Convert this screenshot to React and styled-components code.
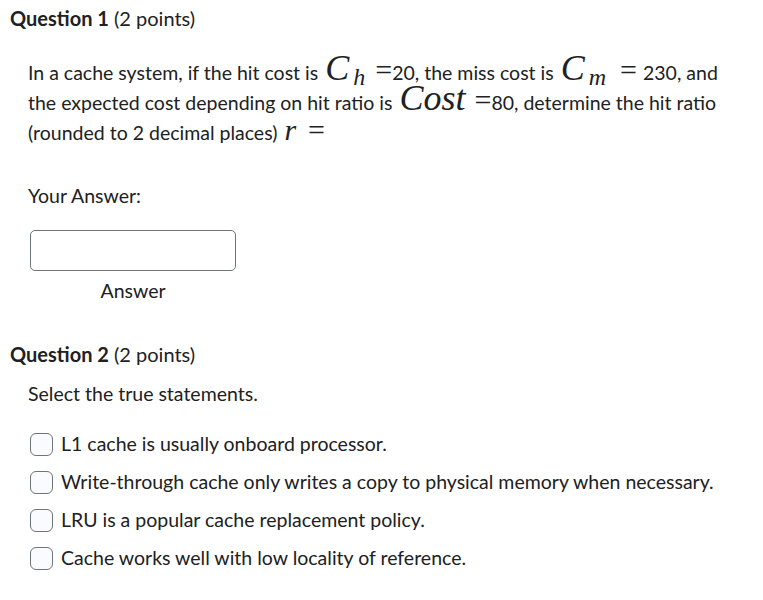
import React from "react"
import styled, { createGlobalStyle } from "styled-components"

const GlobalStyle = createGlobalStyle`
body {
  margin: 0;
  background: #fff;
  color: #202122;
  font-family: Lato, "Noto Sans", sans-serif;
}
`

const Page = styled.div`
padding: 6px 10px 0 10px;
`
const Question = styled.section`
display: flex;
flex-direction: column;
margin-top: ${p => p.gap || 0}px;
`
const Heading = styled.h2`
margin: 0;
font-size: 20px;
font-weight: 400;
line-height: 24px;
b {
  font-weight: 700;
}
`
const Body = styled.div`
padding-left: 18px;
font-size: 19.5px;
`
const Prompt = styled.p`
margin: 28px 0 0 0;
line-height: 30px;
`
const MathVar = styled.span`
font-family: "Liberation Serif", "DejaVu Serif", serif;
font-style: italic;
font-size: ${p => p.size || 36}px;
line-height: 0;
margin-left: 2px;
sub {
  font-size: 24px;
  vertical-align: -5px;
  line-height: 0;
  margin-left: 4px;
}
`
const Eq = styled.span`
font-family: "Liberation Serif", "DejaVu Serif", serif;
font-size: 30px;
line-height: 0;
margin: 0 ${p => p.right || 0}px 0 ${p => p.left || 8}px;
`
const Label = styled.p`
margin: ${p => p.top || 36}px 0 0 0;
line-height: 24px;
`
const AnswerBox = styled.div`
display: flex;
flex-direction: column;
align-items: center;
width: 206px;
margin: 22px 0 0 2px;
`
const TextInput = styled.input`
box-sizing: border-box;
width: 206px;
height: 41px;
border: 1px solid #6e7477;
border-radius: 5px;
outline: none;
`
const AnswerCaption = styled.span`
margin-top: 8px;
line-height: 24px;
`
const Options = styled.div`
display: flex;
flex-direction: column;
gap: 14px;
margin-top: 26px;
`
const Option = styled.label`
display: flex;
align-items: center;
gap: 8px;
line-height: 24px;
`
const Box = styled.span`
box-sizing: border-box;
width: 23px;
height: 23px;
margin-left: 2px;
border: 1.5px solid #6e7477;
border-radius: 6px;
background: #f9fbff;
flex-shrink: 0;
`

const statements = [
  "L1 cache is usually onboard processor.",
  "Write-through cache only writes a copy to physical memory when necessary.",
  "LRU is a popular cache replacement policy.",
  "Cache works well with low locality of reference.",
]

export default function App() {
  return (
    <Page>
      <GlobalStyle />
      <Question>
        <Heading><b>Question 1</b> (2 points)</Heading>
        <Body>
          <Prompt>
            In a cache system, if the hit cost is <MathVar>C<sub>h</sub></MathVar>
            <Eq left={10}>=</Eq>20, the miss cost is <MathVar>C<sub>m</sub></MathVar>
            <Eq left={14} right={6}>=</Eq>230, and<br />
            the expected cost depending on hit ratio is <MathVar>Cost</MathVar>
            <Eq left={9}>=</Eq>80, determine the hit ratio<br />
            (rounded to 2 decimal places) <MathVar size={30}>r</MathVar>
            <Eq left={12}>=</Eq>
          </Prompt>
          <Label>Your Answer:</Label>
          <AnswerBox>
            <TextInput type="text" />
            <AnswerCaption>Answer</AnswerCaption>
          </AnswerBox>
        </Body>
      </Question>
      <Question gap={39}>
        <Heading><b>Question 2</b> (2 points)</Heading>
        <Body>
          <Label top={16}>Select the true statements.</Label>
          <Options>
            {statements.map(s => (
              <Option key={s}>
                <Box />
                {s}
              </Option>
            ))}
          </Options>
        </Body>
      </Question>
    </Page>
  )
}
